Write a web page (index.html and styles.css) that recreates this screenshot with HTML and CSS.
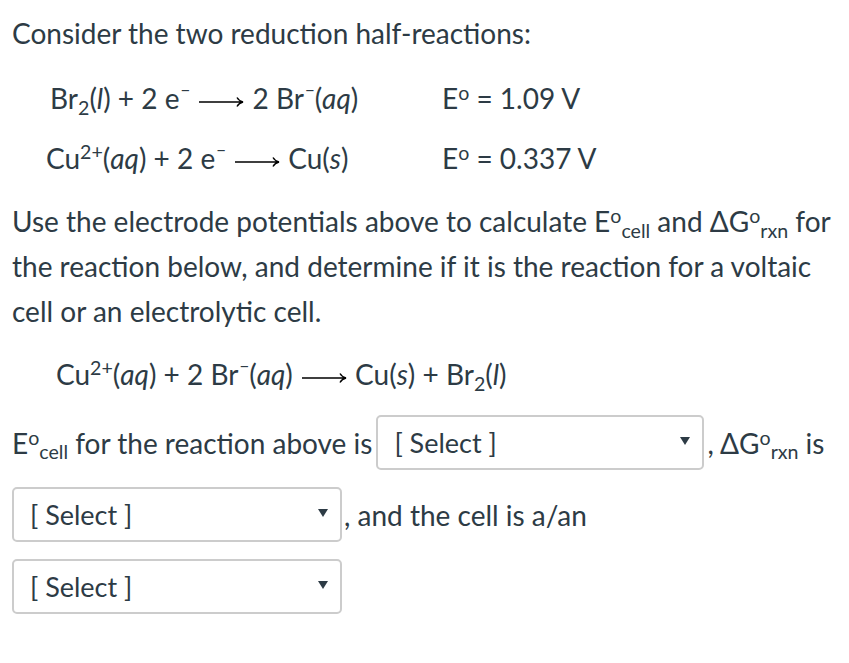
FILE: index.html
```html
<!DOCTYPE html>
<html>
<head>
<meta charset="utf-8">
<link rel="stylesheet" href="styles.css">
</head>
<body>
<div class="page">
  <p class="intro">Consider the two reduction half-reactions:</p>
  <div class="half">
    <div class="rxn r1">Br<sub>2</sub>(<i>l</i>) + 2 e<sup class="minus">&minus;</sup> <svg class="arrow" width="46" height="12" viewBox="0 0 46 12"><path d="M1 6 H44 M39 1.5 Q41 5 45 6 Q41 7 39 10.5" fill="none" stroke="#000" stroke-width="1.4"/></svg> 2 Br<sup class="minus">&minus;</sup>(<i>aq</i>)</div>
    <div class="pot">E<sup class="deg">o</sup> = 1.09 V</div>
    <div class="rxn r2">Cu<sup>2+</sup>(<i>aq</i>) + 2 e<sup class="minus">&minus;</sup> <svg class="arrow" width="46" height="12" viewBox="0 0 46 12"><path d="M1 6 H44 M39 1.5 Q41 5 45 6 Q41 7 39 10.5" fill="none" stroke="#000" stroke-width="1.4"/></svg> Cu(<i>s</i>)</div>
    <div class="pot">E<sup class="deg">o</sup> = 0.337 V</div>
  </div>
  <p class="para">Use the electrode potentials above to calculate E<sup class="deg">o</sup><sub>cell</sub> and &Delta;G<sup class="deg">o</sup><sub>rxn</sub> for the reaction below, and determine if it is the reaction for a voltaic cell or an electrolytic cell.</p>
  <div class="overall">Cu<sup>2+</sup>(<i>aq</i>) + 2 Br<sup class="minus">&minus;</sup>(<i>aq</i>) <svg class="arrow" width="46" height="12" viewBox="0 0 46 12"><path d="M1 6 H44 M39 1.5 Q41 5 45 6 Q41 7 39 10.5" fill="none" stroke="#000" stroke-width="1.4"/></svg> Cu(<i>s</i>) + Br<sub>2</sub>(<i>l</i>)</div>
  <div class="answers">
    <div class="row">
      <span>E<sup class="deg">o</sup><sub>cell</sub> for the reaction above is</span>
      <div class="select sel-a"><span>[ Select ]</span><svg class="caret" width="10" height="10" viewBox="0 0 10 10"><path d="M0 1 H10 L5 9 Z" fill="#2d3b45"/></svg></div>
      <span>, &Delta;G<sup class="deg">o</sup><sub>rxn</sub> is</span>
    </div>
    <div class="row">
      <div class="select"><span>[ Select ]</span><svg class="caret" width="10" height="10" viewBox="0 0 10 10"><path d="M0 1 H10 L5 9 Z" fill="#2d3b45"/></svg></div>
      <span>, and the cell is a/an</span>
    </div>
    <div class="row">
      <div class="select"><span>[ Select ]</span><svg class="caret" width="10" height="10" viewBox="0 0 10 10"><path d="M0 1 H10 L5 9 Z" fill="#2d3b45"/></svg></div>
    </div>
  </div>
</div>
</body>
</html>
```
FILE: styles.css
```css
html, body {
  margin: 0;
  padding: 0;
  background: #ffffff;
}
.page {
  font-family: Lato, "Open Sans", sans-serif;
  font-size: 28px;
  color: #2d3b45;
  padding: 11px 12px 0 12px;
}
p { margin: 0; }
.intro {
  line-height: 45px;
}
sup, sub {
  font-size: 0.7em;
  line-height: 0;
  position: relative;
  vertical-align: baseline;
}
sup { top: -0.5em; }
sub { top: 0.3em; }
sup.minus { font-size: 0.6em; top: -0.75em; margin-left: 1px; }
sup.deg { font-size: 0.7em; top: -0.45em; }
.arrow {
  display: inline-block;
  vertical-align: middle;
  margin: 0 1px;
}
.half {
  display: grid;
  grid-template-columns: 392px auto;
  grid-auto-rows: 60px;
  align-items: center;
  margin-top: 12px;
  padding-left: 38px;
}
.r2 { margin-left: -4px; }
.para {
  line-height: 45px;
  margin-top: 11px;
}
.overall {
  line-height: 45px;
  margin-top: 18px;
  padding-left: 44px;
}
.answers {
  margin-top: 18px;
  display: flex;
  flex-direction: column;
  gap: 17px;
}
.row {
  display: flex;
  align-items: center;
  height: 55px;
  white-space: nowrap;
}
.select {
  box-sizing: border-box;
  width: 330px;
  height: 55px;
  border: 2px solid #cccccc;
  border-radius: 5px;
  display: flex;
  align-items: center;
  justify-content: space-between;
  padding: 0 12px 0 16px;
  font-size: 27px;
  margin-right: 2px;
}
.sel-a {
  width: 328px;
  margin: 0 3px 0 4px;
}
.caret { margin-top: -4px; }
```
